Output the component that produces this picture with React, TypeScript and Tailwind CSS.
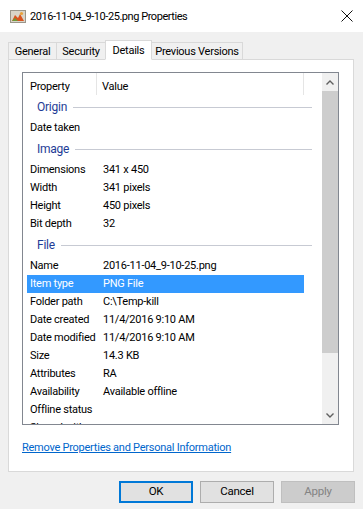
import React from 'react';

type Row =
    | { kind: 'group'; label: string }
    | { kind: 'item'; label: string; value?: string; selected?: boolean };

const rows: Row[] = [
    { kind: 'group', label: 'Origin' },
    { kind: 'item', label: 'Date taken' },
    { kind: 'group', label: 'Image' },
    { kind: 'item', label: 'Dimensions', value: '341 x 450' },
    { kind: 'item', label: 'Width', value: '341 pixels' },
    { kind: 'item', label: 'Height', value: '450 pixels' },
    { kind: 'item', label: 'Bit depth', value: '32' },
    { kind: 'group', label: 'File' },
    { kind: 'item', label: 'Name', value: '2016-11-04_9-10-25.png' },
    { kind: 'item', label: 'Item type', value: 'PNG File', selected: true },
    { kind: 'item', label: 'Folder path', value: 'C:\\Temp-kill' },
    { kind: 'item', label: 'Date created', value: '11/4/2016 9:10 AM' },
    { kind: 'item', label: 'Date modified', value: '11/4/2016 9:10 AM' },
    { kind: 'item', label: 'Size', value: '14.3 KB' },
    { kind: 'item', label: 'Attributes', value: 'RA' },
    { kind: 'item', label: 'Availability', value: 'Available offline' },
    { kind: 'item', label: 'Offline status' },
    { kind: 'item', label: 'Shared with' },
];

const tabs = ['General', 'Security', 'Details', 'Previous Versions'];
const tabWidths = ['w-[49px]', 'w-[50px]', 'w-[47px]', 'w-[92px]'];

function FileIcon() {
    return (
        <svg width="16" height="13" viewBox="0 0 16 13">
            <rect x="0.5" y="0.5" width="15" height="12" fill="#d9d4c8" stroke="#9a958a" />
            <path d="M2 11 L5 5 L8 8 L10 4 L14 11 Z" fill="#d9531e" />
            <circle cx="11.5" cy="3.5" r="1.6" fill="#e8a13a" />
            <path d="M2 11 L5 8 L8 11 Z" fill="#6e9a3a" />
        </svg>
    );
}

function CloseIcon() {
    return (
        <svg width="12" height="12" viewBox="0 0 12 12">
            <path d="M0.5 0.5 L11.5 11.5 M11.5 0.5 L0.5 11.5" stroke="#111" strokeWidth="1" />
        </svg>
    );
}

function Chevron({ up }: { up?: boolean }) {
    return (
        <svg width="8" height="5" viewBox="0 0 8 5">
            <path d={up ? 'M0.5 4.5 L4 1 L7.5 4.5' : 'M0.5 0.5 L4 4 L7.5 0.5'} stroke="#606060" strokeWidth="1.4" fill="none" />
        </svg>
    );
}

export default function App() {
    return (
        <div className="w-[363px] h-[509px] bg-[#f0f0f0] flex flex-col overflow-hidden text-[11px] tracking-[-0.25px] text-black" style={{ fontFamily: 'Roboto, "Liberation Sans", sans-serif' }}>
            {/* title bar */}
            <div className="h-[32px] bg-white flex items-center pl-[10px] pr-[10px] shrink-0">
                <FileIcon />
                <span className="ml-[4px] text-[11px] tracking-[-0.45px] leading-none">2016-11-04_9-10-25.png Properties</span>
                <div className="ml-auto flex items-center">
                    <CloseIcon />
                </div>
            </div>

            {/* tabs */}
            <div className="flex items-end pl-[8px] pt-[7px] h-[27px] shrink-0 relative z-10">
                {tabs.map((t, i) => {
                    const active = t === 'Details';
                    return (
                        <div
                            key={t}
                            className={
                                active
                                    ? `${tabWidths[i]} h-[20px] -mb-px -ml-px bg-white border border-[#d9d9d9] border-b-white flex items-start justify-center pt-[2px]`
                                    : `${tabWidths[i]} h-[17px] bg-[#f0f0f0] border border-[#d9d9d9] border-b-0 ${i > 0 ? '-ml-px' : ''} flex items-center justify-center`
                            }
                        >
                            <span className="leading-[15px] whitespace-nowrap">{t}</span>
                        </div>
                    );
                })}
            </div>

            {/* panel */}
            <div className="ml-[8px] w-[346px] h-[413px] bg-white border border-[#d9d9d9] shrink-0 pl-[13px] pt-[12px]">
                <div className="w-[317px] h-[353px] border border-[#828790] flex">
                    <div className="w-[299px] h-full overflow-hidden">
                        {/* header */}
                        <div className="h-[22px] flex">
                            <div className="w-[74px] pl-[7px] pt-[6px] leading-[16px] border-r border-[#e5e5e5] h-full">Property</div>
                            <div className="w-[207px] pl-[5px] pt-[6px] leading-[16px] border-r border-[#e5e5e5] h-full">Value</div>
                        </div>
                        {rows.map((r) =>
                            r.kind === 'group' ? (
                                <div key={r.label} className="h-[24px] flex items-center pl-[14px] pr-[10px]">
                                    <span className="text-[#1e3c96] text-[12px] leading-none">{r.label}</span>
                                    <div className="flex-1 h-px bg-[#c7cad3] ml-[6px]" />
                                </div>
                            ) : (
                                <div
                                    key={r.label}
                                    className={`h-[18px] ml-[4px] w-[277px] flex items-center ${r.selected ? 'bg-[#3399ff] text-white' : ''}`}
                                >
                                    <div className="w-[70px] pl-[3px] whitespace-nowrap">{r.label}</div>
                                    <div className="pl-[6px] whitespace-nowrap">{r.value}</div>
                                </div>
                            )
                        )}
                    </div>
                    {/* scrollbar */}
                    <div className="w-[16px] h-full bg-[#f0f0f0] flex flex-col">
                        <div className="h-[18px] flex items-center justify-center">
                            <Chevron up />
                        </div>
                        <div className="h-[262px] bg-[#cdcdcd]" />
                        <div className="flex-1" />
                        <div className="h-[17px] flex items-center justify-center">
                            <Chevron />
                        </div>
                    </div>
                </div>
                <div className="mt-[16px] leading-[14px]">
                    <span className="text-[#0066cc] underline">Remove Properties and Personal Information</span>
                </div>
            </div>

            {/* buttons */}
            <div className="flex pl-[119px] gap-[7px] mt-[9px]">
                <button className="w-[74px] h-[22px] bg-[#e1e1e1] border-2 border-[#0078d7] text-[11.5px]">OK</button>
                <button className="w-[74px] h-[22px] bg-[#e1e1e1] border border-[#adadad] text-[11.5px]">Cancel</button>
                <button className="w-[74px] h-[22px] bg-[#cccccc] border border-[#bfbfbf] text-[11.5px] text-[#838383]">Apply</button>
            </div>
        </div>
    );
}
